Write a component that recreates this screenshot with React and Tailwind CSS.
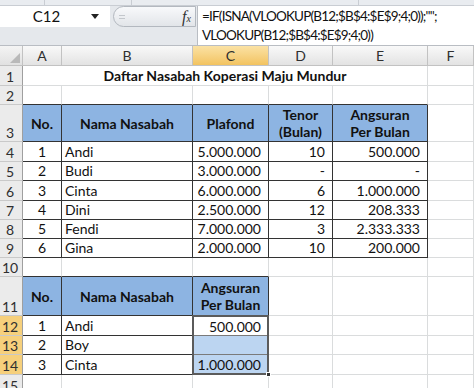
import React from 'react';

// Border colour picks (full class names so Tailwind sees them)
const RB = { l: 'border-r-[#dadcdd]', d: 'border-r-[#333333]', n: 'border-r-transparent' };
const BB = { l: 'border-b-[#dadcdd]', d: 'border-b-[#333333]' };
const ALIGN = {
  left: 'justify-start pl-[3px]',
  right: 'justify-end pr-[7px]',
  center: 'justify-center',
};

const people = [
  ['1', 'Andi', '5.000.000', '10', '500.000'],
  ['2', 'Budi', '3.000.000', '-', '-'],
  ['3', 'Cinta', '6.000.000', '6', '1.000.000'],
  ['4', 'Dini', '2.500.000', '12', '208.333'],
  ['5', 'Fendi', '7.000.000', '3', '2.333.333'],
  ['6', 'Gina', '2.000.000', '10', '200.000'],
];

const Cell = ({ children, r = 'l', b = 'l', align = 'left', className = '' }) => (
  <div
    className={`flex items-end pb-[1px] leading-[17px] border-r border-b whitespace-nowrap overflow-hidden ${RB[r]} ${BB[b]} ${ALIGN[align]} ${className}`}
  >
    {children}
  </div>
);

const HeadCell = ({ children, r = 'd' }) => (
  <div
    className={`flex flex-col items-center justify-center text-center font-bold leading-[17px] bg-[#8db4e2] border-r border-b ${RB[r]} border-b-[#333333]`}
  >
    {children}
  </div>
);

const RowHead = ({ n, sel }) => (
  <div
    className={`flex items-end justify-center pr-[2px] leading-[17px] border-r border-b border-r-[#9f9f9f] border-b-[#c9c9c9] text-[#2f2f2f] ${
      sel ? 'bg-[#f6d07c]' : 'bg-[#ebebeb]'
    }`}
  >
    {n}
  </div>
);

const ColHead = ({ children, sel }) => (
  <div
    className={`flex items-center justify-center leading-[17px] border-r border-b border-[#c2c2c2] text-[#2f2f2f] ${
      sel ? 'bg-linear-to-b from-[#fbe2a4] to-[#f2c35f]' : 'bg-linear-to-b from-[#f9f9f9] to-[#e3e3e3]'
    }`}
  >
    {children}
  </div>
);

const Empty = ({ r = 'l', b = 'l' }) => <Cell r={r} b={b} />;

export default function App() {
  return (
    <div className="w-[474px] h-[388px] overflow-hidden bg-white text-[14px] text-[#111] font-['Lato','Noto_Sans',sans-serif]">
      {/* ribbon edge */}
      <div className="h-[6px] flex bg-[#e9ecf0] border-b border-[#c9cdd3]">
        <div className="w-[45px] border-r border-[#c9cdd3]" />
        <div className="w-[87px] border-r border-[#c9cdd3]" />
        <div className="w-[227px] border-r border-[#c9cdd3]" />
      </div>

      {/* formula bar */}
      <div className="flex h-[40px] bg-[#e5e8ec] border-b border-[#b9bdc3]">
        <div className="w-[197px] flex flex-col">
          <div className="h-[21px] flex">
            <div className="w-[110px] bg-white flex items-center">
              <span className="w-[93px] text-center text-[15px] leading-none">C12</span>
              <svg width="8" height="5" viewBox="0 0 8 5" className="ml-[-2px]">
                <path d="M0 0h8L4 5z" fill="#222" />
              </svg>
            </div>
            <div className="ml-[3px] mr-[1px] flex-1 flex items-center justify-between rounded-l-full border border-[#b3b8bf] bg-linear-to-b from-[#f8f9fb] to-[#e2e5e9] pl-[5px] pr-[4px]">
              <svg width="6" height="6" viewBox="0 0 6 6">
                <path d="M0 1.5h6M0 4.5h6" stroke="#c3c7cc" strokeWidth="1" />
              </svg>
              <span className="font-['Liberation_Serif',serif] italic text-[#333] text-[16px] leading-none">
                f<span className="text-[10px]">x</span>
              </span>
            </div>
          </div>
        </div>
        <div className="flex-1 bg-white border-l border-[#b9bdc3] pl-[4px] pt-[1px] text-[13.5px] tracking-[-0.8px] leading-[19px] whitespace-nowrap overflow-hidden">
          <div>=IF(ISNA(VLOOKUP(B12;$B$4:$E$9;4;0));"";</div>
          <div>VLOOKUP(B12;$B$4:$E$9;4;0))</div>
        </div>
      </div>

      {/* sheet grid */}
      <div className="grid grid-cols-[23px_39px_131px_76px_64px_95px_1fr] grid-rows-[20px_20px_19px_37px_20px_19px_20px_19px_19px_19px_19px_39px_20px_19px_20px_20px]">
        {/* column headers */}
        <div className="relative border-r border-b border-[#c2c2c2] bg-linear-to-b from-[#f4f4f4] to-[#e1e1e1]">
          <svg width="10" height="10" viewBox="0 0 10 10" className="absolute right-[2px] bottom-[2px]">
            <path d="M10 0V10H0z" fill="#b9b9b9" />
          </svg>
        </div>
        <ColHead>A</ColHead>
        <ColHead>B</ColHead>
        <ColHead sel>C</ColHead>
        <ColHead>D</ColHead>
        <ColHead>E</ColHead>
        <ColHead>F</ColHead>

        {/* row 1 */}
        <RowHead n="1" />
        <Cell align="center" className="col-span-5 font-bold">Daftar Nasabah Koperasi Maju Mundur</Cell>
        <Empty />

        {/* row 2 */}
        <RowHead n="2" />
        <Empty b="d" />
        <Empty b="d" />
        <Empty b="d" />
        <Empty b="d" />
        <Empty b="d" />
        <Empty />

        {/* row 3 table header */}
        <RowHead n="3" />
        <HeadCell>No.</HeadCell>
        <HeadCell>Nama Nasabah</HeadCell>
        <HeadCell>Plafond</HeadCell>
        <HeadCell>
          <span>Tenor</span>
          <span>(Bulan)</span>
        </HeadCell>
        <HeadCell>
          <span>Angsuran</span>
          <span>Per Bulan</span>
        </HeadCell>
        <Empty />

        {/* rows 4-9 */}
        {people.map((p, i) => (
          <React.Fragment key={p[0]}>
            <RowHead n={String(i + 4)} />
            <Cell r="d" b="d" align="center">{p[0]}</Cell>
            <Cell r="d" b="d">{p[1]}</Cell>
            <Cell r="d" b="d" align="right">{p[2]}</Cell>
            <Cell r="d" b="d" align="right">{p[3]}</Cell>
            <Cell r="d" b="d" align="right">{p[4]}</Cell>
            <Empty />
          </React.Fragment>
        ))}

        {/* row 10 */}
        <RowHead n="10" />
        <Empty b="d" />
        <Empty b="d" />
        <Empty b="d" />
        <Empty />
        <Empty />
        <Empty />

        {/* row 11 second table header */}
        <RowHead n="11" />
        <HeadCell>No.</HeadCell>
        <HeadCell>Nama Nasabah</HeadCell>
        <HeadCell>
          <span>Angsuran</span>
          <span>Per Bulan</span>
        </HeadCell>
        <Empty />
        <Empty />
        <Empty />

        {/* row 12 with the selected range C12:C14 */}
        <RowHead n="12" sel />
        <Cell r="d" b="d" align="center">1</Cell>
        <Cell r="d" b="d">Andi</Cell>
        <div className="row-span-3 relative flex flex-col leading-[17px] border-2 border-[#5b5b5b] -ml-[1px] -mt-[1px]">
          <div className="flex-1 flex items-end justify-end pr-[6px] bg-white border-b border-[#7a7a7a]">500.000</div>
          <div className="flex-1 bg-[#bcd5f1] border-b border-[#7a7a7a]" />
          <div className="flex-1 flex items-end justify-end pr-[6px] bg-[#bcd5f1]">1.000.000</div>
          <div className="absolute -right-[4px] -bottom-[4px] w-[5px] h-[5px] bg-[#333] border border-white" />
        </div>
        <Empty />
        <Empty />
        <Empty />

        {/* row 13 */}
        <RowHead n="13" sel />
        <Cell r="d" b="d" align="center">2</Cell>
        <Cell r="d" b="d">Boy</Cell>
        <Empty />
        <Empty />
        <Empty />

        {/* row 14 */}
        <RowHead n="14" sel />
        <Cell r="d" b="d" align="center">3</Cell>
        <Cell r="d" b="d">Cinta</Cell>
        <Empty />
        <Empty />
        <Empty />

        {/* row 15 */}
        <RowHead n="15" />
        <Empty />
        <Empty />
        <Empty />
        <Empty />
        <Empty />
        <Empty />
      </div>
    </div>
  );
}
